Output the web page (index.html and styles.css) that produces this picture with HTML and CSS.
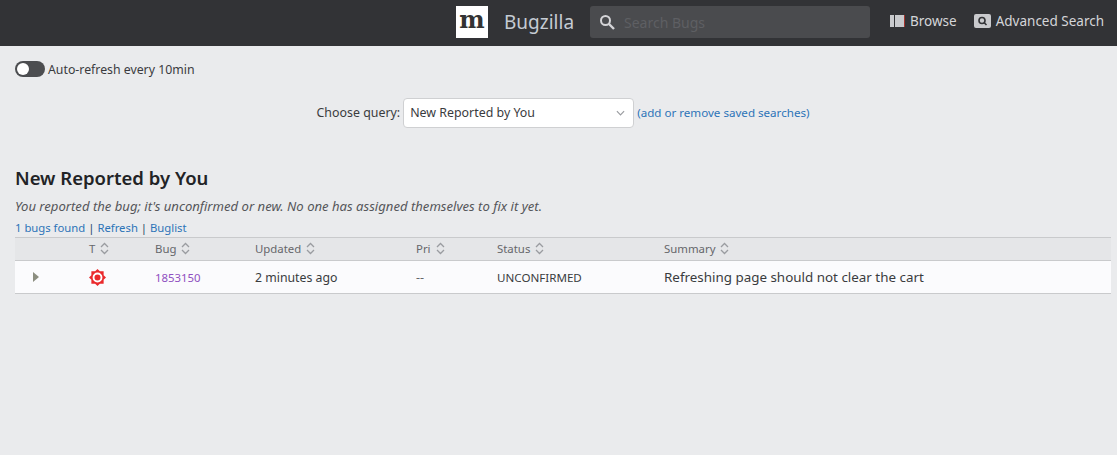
FILE: index.html
```html
<!DOCTYPE html>
<html lang="en">
<head>
    <meta charset="UTF-8">
    <title>Bugzilla</title>
    <link rel="stylesheet" href="styles.css">
</head>
<body>
    <div class="top-bar">
        <div class="logo">m</div>
        <div class="app-name">Bugzilla</div>
        <div class="search-box">
            <svg class="search-icon" width="16" height="16" viewBox="0 0 16 16">
                <circle cx="6.5" cy="6.5" r="4.5" fill="none" stroke="#d5d5d8" stroke-width="2"/>
                <path d="M10 10l5 5" stroke="#d5d5d8" stroke-width="2.4"/>
            </svg>
            <span class="search-text">Search Bugs</span>
        </div>
        <a class="top-link browse-link">
            <svg width="15" height="12" viewBox="0 0 15 12">
                <rect width="15" height="12" fill="#c9cacd"/>
                <rect x="4" width="1" height="12" fill="#323336"/>
                <rect x="14" width="1" height="12" fill="#a5342c"/>
            </svg>
            Browse
        </a>
        <a class="top-link">
            <svg width="17" height="14" viewBox="0 0 17 14">
                <rect width="17" height="14" rx="2" fill="#c9cacd"/>
                <circle cx="8" cy="6.5" r="3" fill="none" stroke="#323336" stroke-width="1.6"/>
                <path d="M10 8.5l2.5 2.5" stroke="#323336" stroke-width="1.6"/>
            </svg>
            Advanced Search
        </a>
    </div>

    <div class="content">
        <div class="refresh-row">
            <span class="toggle"><span class="toggle-knob"></span></span>
            Auto-refresh every 10min
        </div>

        <div class="query-row">
            <span>Choose query:</span>
            <div class="query-select">
                <span>New Reported by You</span>
                <svg width="9" height="6" viewBox="0 0 10 6">
                    <path d="M1 1l4 4 4-4" fill="none" stroke="#9a9ca0" stroke-width="1.3"/>
                </svg>
            </div>
            <span class="saved-link">(<a>add or remove saved searches</a>)</span>
        </div>

        <h2>New Reported by You</h2>
        <p class="description">You reported the bug; it's unconfirmed or new. No one has assigned themselves to fix it yet.</p>
        <div class="bug-links"><a>1 bugs found</a> <span class="sep">|</span> <a>Refresh</a> <span class="sep">|</span> <a>Buglist</a></div>

        <div class="bug-table">
            <div class="table-row table-head">
                <div></div>
                <div>T <svg class="sort"><use href="#sort-icon"/></svg></div>
                <div>Bug <svg class="sort"><use href="#sort-icon"/></svg></div>
                <div>Updated <svg class="sort"><use href="#sort-icon"/></svg></div>
                <div>Pri <svg class="sort"><use href="#sort-icon"/></svg></div>
                <div>Status <svg class="sort"><use href="#sort-icon"/></svg></div>
                <div>Summary <svg class="sort"><use href="#sort-icon"/></svg></div>
            </div>
            <div class="table-row table-body">
                <div class="expand"><span class="arrow"></span></div>
                <div>
                    <svg class="defect-icon" width="17" height="17" viewBox="0 0 18 18">
                        <path d="M9 0l2.500 2.500h4v4L18 9l-2.500 2.500v4h-4L9 18l-2.500-2.500h-4v-4L0 9l2.500-2.500v-4h4z" fill="#ea2a2c"/>
                        <circle cx="9" cy="9" r="4.200" fill="#ea2a2c" stroke="#fff" stroke-width="2"/>
                    </svg>
                </div>
                <div class="bug-id">1853150</div>
                <div class="updated">2 minutes ago</div>
                <div class="pri">--</div>
                <div class="status">UNCONFIRMED</div>
                <div class="summary">Refreshing page should not clear the cart</div>
            </div>
        </div>
    </div>

    <svg class="icon-defs" width="0" height="0">
        <symbol id="sort-icon" viewBox="0 0 9 13">
            <path d="M1 5l3.500-3.500L8 5M1 8l3.500 3.500L8 8" fill="none" stroke="#9a9ca0" stroke-width="1.300"/>
        </symbol>
    </svg>
</body>
</html>
```

FILE: styles.css
```css
/* Reset */
body, html {
    margin: 0;
    padding: 0;
    height: 100%;
    background: #eaebed;
    color: #3a3b3e;
    font-family: "Noto Sans", "Open Sans", sans-serif;
    font-size: 12.4px;
    overflow: hidden;
}

a {
    color: #2d74b8;
}

/* Top bar */
.top-bar {
    height: 46px;
    box-sizing: border-box;
    background: #323336;
    display: flex;
    align-items: flex-start;
    padding: 6px 0 0 456px;
    color: #d5d6d9;
}

.logo {
    width: 32px;
    height: 32px;
    background: #fff;
    color: #333;
    font-family: "DejaVu Serif", serif;
    font-weight: bold;
    font-size: 24px;
    line-height: 27px;
    text-align: center;
}

.app-name {
    margin-left: 16px;
    width: 86px;
    font-size: 19px;
    line-height: 32px;
    color: #c5cbd3;
}

.search-box {
    width: 280px;
    height: 32px;
    background: #4a4b4e;
    border-radius: 3px;
    display: flex;
    align-items: center;
    box-sizing: border-box;
    padding-left: 9px;
}

.search-text {
    margin-left: 9px;
    font-size: 14px;
    color: #5e5f63;
}

.top-link {
    display: flex;
    align-items: center;
    gap: 5px;
    height: 30px;
    font-size: 13.5px;
    color: #d5d6d9;
    margin-left: 17px;
}

.browse-link {
    margin-left: 20px;
}

/* Content */
.content {
    padding: 0 6px 0 15px;
}

.refresh-row {
    display: flex;
    align-items: center;
    gap: 3px;
    height: 46px;
    font-size: 12.3px;
}

.toggle {
    width: 30px;
    height: 16px;
    border-radius: 8px;
    background: #4c4d50;
    display: block;
    position: relative;
}

.toggle-knob {
    position: absolute;
    left: 2px;
    top: 2px;
    width: 12px;
    height: 12px;
    border-radius: 50%;
    background: #fff;
}

.query-row {
    display: flex;
    justify-content: center;
    align-items: center;
    gap: 3px;
    height: 30px;
    margin-top: 6px;
}

.query-row span {
    padding-bottom: 2px;
}

.query-select {
    width: 231px;
    height: 30px;
    box-sizing: border-box;
    background: #fff;
    border: 1px solid #cfd0d2;
    border-radius: 4px;
    padding: 0 8px 0 6px;
    display: flex;
    justify-content: space-between;
    align-items: center;
}

.saved-link {
    font-size: 11.6px;
    color: #2d74b8;
}

h2 {
    margin: 37px 0 0;
    font-size: 18.5px;
    line-height: 26px;
    font-weight: 600;
    color: #222326;
}

.description {
    margin: 7px 0 0;
    font-size: 13.1px;
    font-style: italic;
    line-height: 17px;
    color: #55565a;
}

.bug-links {
    margin-top: 5px;
    height: 16px;
    line-height: 16px;
    font-size: 11.3px;
}

.sep {
    color: #2b4a66;
}

/* Tabela */
.bug-table {
    margin-top: 1px;
}

.table-row {
    display: grid;
    grid-template-columns: 74px 66px 100px 161px 81px 167px 1fr;
    align-items: center;
}

.table-head {
    height: 20px;
    padding-bottom: 2px;
    background: #e5e6e8;
    border-top: 1px solid #c9cacc;
    border-bottom: 1px solid #c9cacc;
    font-size: 11.4px;
    color: #66676b;
}

.table-body {
    height: 32px;
    background: #fbfbfd;
    border-bottom: 1px solid #c9cacc;
}

.sort {
    width: 9px;
    height: 13px;
    margin-left: 2px;
    vertical-align: -2px;
}

.icon-defs {
    position: absolute;
}

.expand {
    padding-left: 18px;
}

.arrow {
    display: block;
    width: 0;
    height: 0;
    border-left: 6px solid #8c8e80;
    border-top: 5px solid transparent;
    border-bottom: 5px solid transparent;
}

.defect-icon {
    display: block;
}

.bug-id {
    font-size: 11.4px;
    color: #8f4fc0;
}

.updated {
    font-size: 12.3px;
}

.pri {
    color: #66676b;
}

.status {
    font-size: 11.6px;
}

.summary {
    font-size: 13.4px;
}
```
